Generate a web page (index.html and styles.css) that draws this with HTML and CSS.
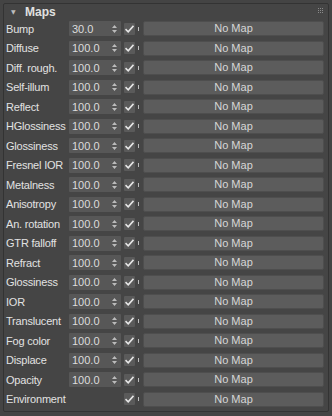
FILE: index.html
```html
<!DOCTYPE html>
<html lang="en">
<head>
  <meta charset="UTF-8" />
  <meta name="viewport" content="width=device-width, initial-scale=1.0"/>
  <title>Maps</title>
  <link rel="stylesheet" href="styles.css">
</head>
<body>
  <div class="rollout">
    <div class="rollout-head">
      <span class="arrow">&#9660;</span>
      <span class="title">Maps</span>
      <span class="grip"><i></i><i></i><i></i><i></i><i></i><i></i><i></i><i></i><i></i></span>
    </div>

    <div class="maps" id="maps"></div>
  </div>

  <script>
    const rows = [
      ['Bump', '30.0'], ['Diffuse', '100.0'], ['Diff. rough.', '100.0'],
      ['Self-illum', '100.0'], ['Reflect', '100.0'], ['HGlossiness', '100.0'],
      ['Glossiness', '100.0'], ['Fresnel IOR', '100.0'], ['Metalness', '100.0'],
      ['Anisotropy', '100.0'], ['An. rotation', '100.0'], ['GTR falloff', '100.0'],
      ['Refract', '100.0'], ['Glossiness', '100.0'], ['IOR', '100.0'],
      ['Translucent', '100.0'], ['Fog color', '100.0'], ['Displace', '100.0'],
      ['Opacity', '100.0'], ['Environment', null]
    ];
    const maps = document.getElementById('maps');
    rows.forEach(([name, value]) => {
      const spinner = value === null ? '<span class="spinner-empty"></span>' :
        `<span class="spinner"><span class="val">${value}</span><span class="arrows">
          <svg width="5" height="8" viewBox="0 0 5 8"><path d="M2.5 0L5 3H0z M2.5 8L0 5h5z" fill="#bbb"/></svg></span></span>`;
      maps.insertAdjacentHTML('beforeend', `
        <div class="map-row">
          <span class="label">${name}</span>
          ${spinner}
          <span class="check"><svg width="9" height="8" viewBox="0 0 9 8"><path d="M0.5 4.2L3.2 6.8L8.5 0.8" stroke="#e6e6e6" stroke-width="1.6" fill="none"/></svg></span>
          <span class="tick"></span>
          <span class="map-btn">No Map</span>
        </div>`);
    });
  </script>
</body>
</html>
```

FILE: styles.css
```css
html, body {
  margin: 0;
  background-color: #444444;
}

body {
  width: 332px;
  height: 416px;
  padding: 3px 3px 0 3px;
  box-sizing: border-box;
  font-family: "DejaVu Sans", "Liberation Sans", sans-serif;
  font-size: 11px;
  color: #dcdcdc;
}

.rollout {
  height: 409px;
  border: 1px solid #333333;
  border-radius: 2px;
  background-color: #454545;
  box-sizing: border-box;
  padding: 0 4px 0 2px;
}

.rollout-head {
  display: flex;
  align-items: center;
  height: 15px;
  position: relative;
}

.arrow {
  font-size: 6px;
  color: #bdbdbd;
  margin-left: 5px;
  width: 9px;
}

.title {
  font-family: "Liberation Sans", Arial, sans-serif;
  font-weight: bold;
  font-size: 12px;
  color: #e0e0e0;
  margin-left: 5px;
}

.grip {
  position: absolute;
  right: 1px;
  top: 4px;
  display: grid;
  grid-template-columns: repeat(3, 1px);
  gap: 1px;
}

.grip i {
  width: 1px;
  height: 1px;
  background-color: #8a8a8a;
}

.maps {
  display: grid;
  grid-auto-rows: 19.5px;
}

.map-row {
  display: flex;
  align-items: center;
}

.label {
  width: 63px;
  white-space: nowrap;
  font-family: "Liberation Sans", Arial, sans-serif;
  font-size: 11px;
  letter-spacing: -0.2px;
  color: #e2e2e2;
}

.spinner, .spinner-empty {
  width: 52px;
  height: 15px;
  box-sizing: border-box;
  display: flex;
  align-items: center;
}

.spinner {
  background-color: #575757;
  border-radius: 1px;
  padding: 0 4px 0 3px;
}

.val {
  flex: 1;
  font-family: "Liberation Sans", Arial, sans-serif;
  font-size: 11px;
  color: #dcdcdc;
}

.arrows {
  display: flex;
}

.check {
  width: 11px;
  height: 12px;
  margin-left: 3px;
  background-color: #5a5a5a;
  border-radius: 1px;
  display: flex;
  align-items: center;
  justify-content: center;
}

.tick {
  width: 1px;
  height: 4px;
  margin: 0 4px 0 3px;
  background-color: #bdbdbd;
}

.map-btn {
  flex: 1;
  height: 15px;
  box-sizing: border-box;
  border: 1px solid #4e4e4e;
  border-radius: 2px;
  background-color: #5c5c5c;
  font-family: "Liberation Sans", Arial, sans-serif;
  font-size: 11px;
  color: #d6d6d6;
  text-align: center;
  line-height: 13px;
}
```
